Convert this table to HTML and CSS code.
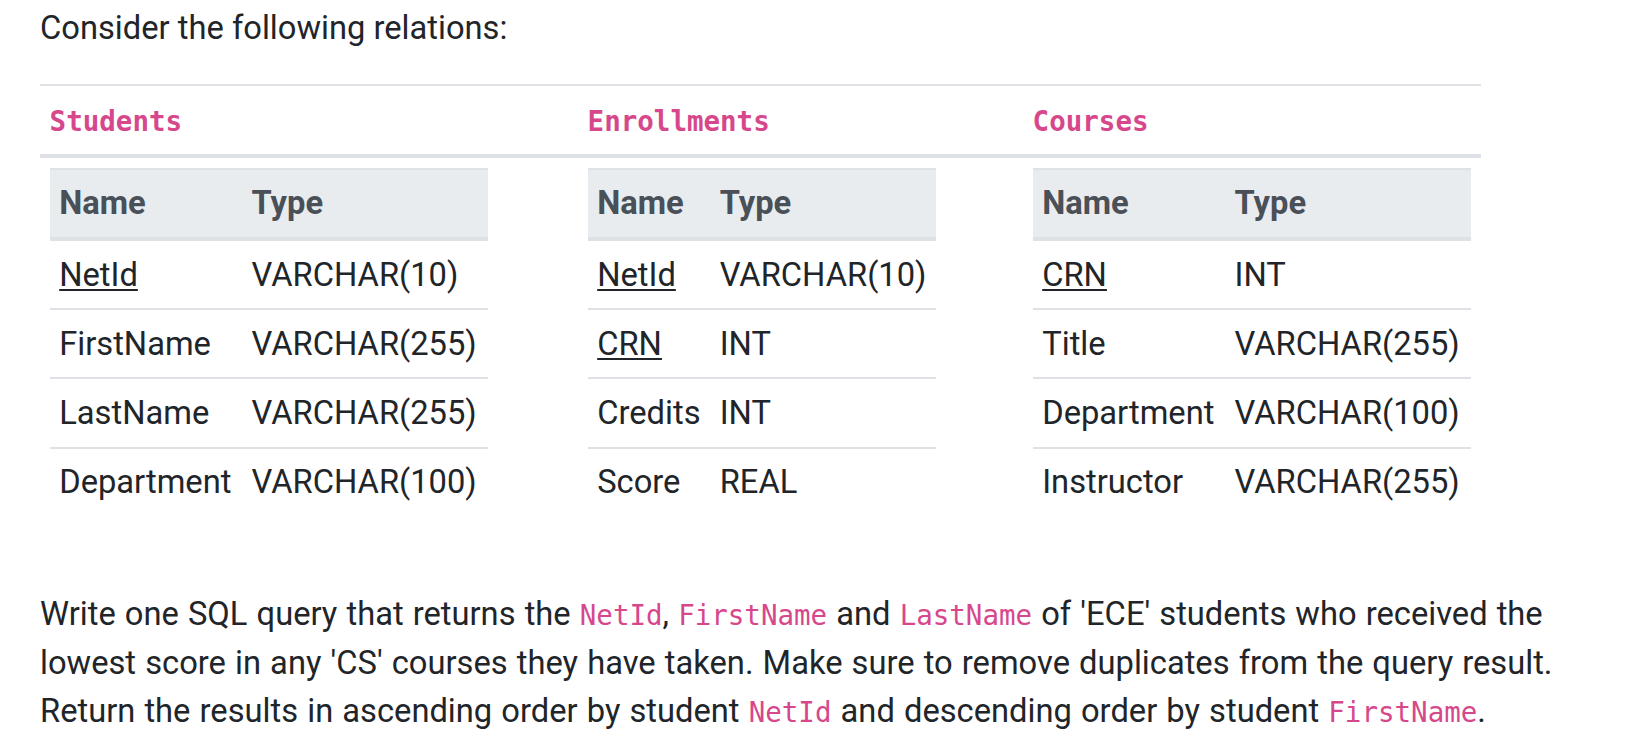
FILE: index.html
```html
<!DOCTYPE html>
<html lang="en">
<head>
<meta charset="utf-8">
<title>Relations</title>
<link rel="stylesheet" href="styles.css">
</head>
<body>
<div class="page">
  <p class="intro">Consider the following relations:</p>
  <table class="relations">
    <colgroup>
      <col class="col-students">
      <col class="col-enrollments">
      <col class="col-courses">
    </colgroup>
    <thead>
      <tr>
        <th><code>Students</code></th>
        <th><code>Enrollments</code></th>
        <th><code>Courses</code></th>
      </tr>
    </thead>
    <tbody>
      <tr>
        <td>
          <table class="schema schema-wide">
            <thead><tr><th>Name</th><th>Type</th></tr></thead>
            <tbody>
              <tr><td><u>NetId</u></td><td>VARCHAR(10)</td></tr>
              <tr><td>FirstName</td><td>VARCHAR(255)</td></tr>
              <tr><td>LastName</td><td>VARCHAR(255)</td></tr>
              <tr><td>Department</td><td>VARCHAR(100)</td></tr>
            </tbody>
          </table>
        </td>
        <td>
          <table class="schema">
            <thead><tr><th>Name</th><th>Type</th></tr></thead>
            <tbody>
              <tr><td><u>NetId</u></td><td>VARCHAR(10)</td></tr>
              <tr><td><u>CRN</u></td><td>INT</td></tr>
              <tr><td>Credits</td><td>INT</td></tr>
              <tr><td>Score</td><td>REAL</td></tr>
            </tbody>
          </table>
        </td>
        <td>
          <table class="schema schema-wide">
            <thead><tr><th>Name</th><th>Type</th></tr></thead>
            <tbody>
              <tr><td><u>CRN</u></td><td>INT</td></tr>
              <tr><td>Title</td><td>VARCHAR(255)</td></tr>
              <tr><td>Department</td><td>VARCHAR(100)</td></tr>
              <tr><td>Instructor</td><td>VARCHAR(255)</td></tr>
            </tbody>
          </table>
        </td>
      </tr>
    </tbody>
  </table>
  <p class="task">Write one SQL query that returns the <code>NetId</code>, <code>FirstName</code> and <code>LastName</code> of 'ECE' students who received the lowest score in any 'CS' courses they have taken. Make sure to remove duplicates from the query result. Return the results in ascending order by student <code>NetId</code> and descending order by student <code>FirstName</code>.</p>
</div>
</body>
</html>
```
FILE: styles.css
```css
* {
  box-sizing: border-box;
}

body {
  margin: 0;
  background: #ffffff;
  color: #212529;
  font-family: Roboto, "Liberation Sans", Arial, sans-serif;
  font-size: 32.7px;
  line-height: 48px;
}

.page {
  padding: 4px 36px 0 40px;
}

p {
  margin: 0 0 32px 0;
}

.task {
  word-spacing: 1px;
}

code {
  font-family: "DejaVu Sans Mono", "Liberation Mono", monospace;
  font-size: 27.5px;
  color: #d6488b;
  word-spacing: 0;
  letter-spacing: 0;
}

table {
  border-collapse: collapse;
}

.relations {
  width: 1441px;
  table-layout: fixed;
  margin-bottom: 33px;
}

.col-students { width: 538px; }
.col-enrollments { width: 445px; }
.col-courses { width: 458px; }

.relations > thead > tr > th,
.relations > tbody > tr > td {
  padding: 9.6px;
  border-top: 2px solid #dee2e6;
  text-align: left;
  vertical-align: top;
}

.relations > thead > tr > th {
  vertical-align: bottom;
  border-bottom: 4px solid #dee2e6;
  font-weight: 700;
}

.schema {
  margin-bottom: 32px;
}

.schema-wide {
  width: 438px;
}

.schema th,
.schema td {
  padding: 9.6px;
  border-top: 2px solid #dee2e6;
  text-align: left;
  vertical-align: top;
  white-space: nowrap;
}

.schema thead th {
  vertical-align: bottom;
  background: #e9ecef;
  color: #495057;
  font-weight: 700;
  border-bottom: 4px solid #dee2e6;
}

u {
  text-decoration-thickness: 2px;
  text-underline-offset: 3px;
}
```
